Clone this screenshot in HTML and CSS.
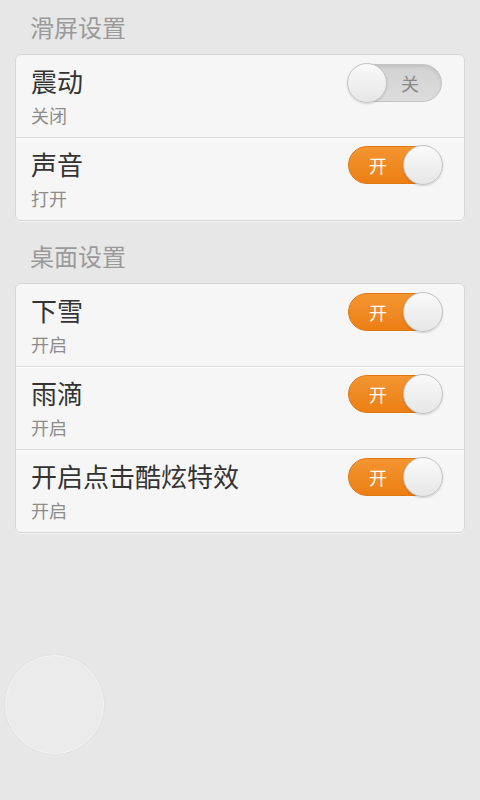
FILE: index.html
```html
<!DOCTYPE html>
<html lang="zh">
<head>
  <meta charset="UTF-8" />
  <meta name="viewport" content="width=device-width, initial-scale=1.0"/>
  <title>设置</title>
  <link rel="stylesheet" href="styles.css">
</head>
<body>
  <div class="page">
    <div class="section">
      <h2 class="section-title">滑屏设置</h2>
      <div class="card">
        <div class="row">
          <div class="text">
            <div class="name">震动</div>
            <div class="state">关闭</div>
          </div>
          <div class="switch off"><span class="label">关</span><span class="knob"></span></div>
        </div>
        <div class="row">
          <div class="text">
            <div class="name">声音</div>
            <div class="state">打开</div>
          </div>
          <div class="switch on"><span class="label">开</span><span class="knob"></span></div>
        </div>
      </div>
    </div>

    <div class="section">
      <h2 class="section-title">桌面设置</h2>
      <div class="card">
        <div class="row">
          <div class="text">
            <div class="name">下雪</div>
            <div class="state">开启</div>
          </div>
          <div class="switch on"><span class="label">开</span><span class="knob"></span></div>
        </div>
        <div class="row">
          <div class="text">
            <div class="name">雨滴</div>
            <div class="state">开启</div>
          </div>
          <div class="switch on"><span class="label">开</span><span class="knob"></span></div>
        </div>
        <div class="row">
          <div class="text">
            <div class="name">开启点击酷炫特效</div>
            <div class="state">开启</div>
          </div>
          <div class="switch on"><span class="label">开</span><span class="knob"></span></div>
        </div>
      </div>
    </div>
  </div>

  <div class="float-ball"></div>
</body>
</html>
```

FILE: styles.css
```css
body {
  margin: 0;
  background: #e7e7e7;
  font-family: "Noto Sans CJK SC", "Noto Sans", sans-serif;
  height: 800px;
  overflow: hidden;
}
.page {
  padding: 0 15px;
}
.section + .section {
  margin-top: 8px;
}
.section-title {
  margin: 0;
  padding: 12px 0 12px 15px;
  font-size: 24px;
  line-height: 30px;
  font-weight: normal;
  color: #9a9a9a;
}
.card {
  background: #f6f6f6;
  border: 1px solid #d6d6d6;
  border-radius: 6px;
  box-shadow: 0 1px 0 #f2f2f2;
}
.row {
  height: 82px;
  display: flex;
  justify-content: space-between;
  align-items: flex-start;
  padding: 0 22px 0 15px;
  box-sizing: border-box;
}
.row + .row {
  height: 83px;
  border-top: 1px solid #dcdcdc;
  box-shadow: inset 0 1px 0 #ffffff;
}
.name {
  margin-top: 11px;
  font-size: 26px;
  line-height: 30px;
  color: #333;
}
.state {
  margin-top: 8px;
  font-size: 18px;
  line-height: 22px;
  color: #8c8c8c;
}
.switch {
  position: relative;
  margin-top: 9px;
  width: 94px;
  height: 38px;
  border-radius: 19px;
  box-sizing: border-box;
  display: flex;
  align-items: center;
}
.row + .row .switch {
  margin-top: 8px;
}
.switch.off {
  background: linear-gradient(#d2d2d2, #dcdcdc);
  border: 1px solid #c4c4c4;
  box-shadow: inset 0 2px 3px rgba(0,0,0,0.08);
  justify-content: flex-end;
}
.switch.on {
  background: linear-gradient(#f39531, #ec7f14);
  border: 1px solid #e07812;
}
.label {
  font-size: 18px;
  text-align: center;
}
.switch.on .label {
  width: 58px;
  color: #fff;
}
.switch.off .label {
  width: 62px;
  color: #8a8a8a;
}
.knob {
  position: absolute;
  top: -2px;
  width: 40px;
  height: 40px;
  border-radius: 50%;
  box-sizing: border-box;
  background: linear-gradient(#fafafa, #e6e6e6);
  border: 1px solid #c2c2c2;
  box-shadow: 0 1px 2px rgba(0,0,0,0.15);
}
.switch.off .knob {
  left: -2px;
}
.switch.on .knob {
  right: -2px;
}
.float-ball {
  position: absolute;
  left: 5px;
  top: 655px;
  width: 97px;
  height: 97px;
  border-radius: 50%;
  background: #ebebeb;
  border: 1px solid #f3f3f3;
  box-shadow: 0 0 2px rgba(0,0,0,0.06);
}
```
